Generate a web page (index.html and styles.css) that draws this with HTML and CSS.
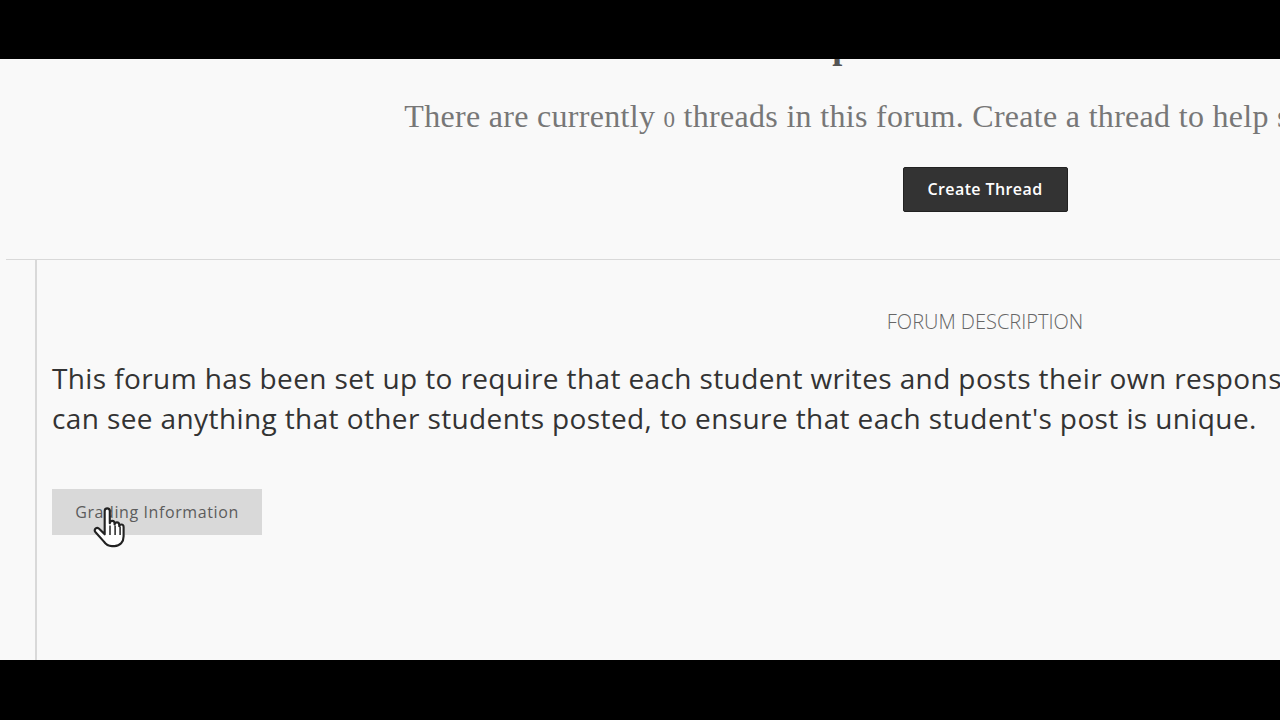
FILE: index.html
```html
<!DOCTYPE html>
<html lang="en">
<head>
<meta charset="utf-8">
<title>Forum</title>
<link rel="stylesheet" href="styles.css">
</head>
<body>
<div class="letterbox"></div>
<main class="viewport">
  <div class="canvas">
    <section class="intro">
      <h1 class="forum-title">This is a post-first discussion forum</h1>
      <p class="empty-note">There are currently <span class="oldnum">0</span> threads in this forum. Create a thread to help start the conversation.</p>
      <button class="create-btn">Create Thread</button>
    </section>
    <section class="description">
      <h2 class="desc-label">FORUM DESCRIPTION</h2>
      <p class="desc-text">This forum has been set up to require that each student writes and posts their own response before they<br>can see anything that other students posted, to ensure that each student's post is unique.</p>
      <div class="grading">
        <button class="grading-btn">Grading Information</button>
        <svg class="cursor" viewBox="0 0 32 38" width="34" height="41" aria-hidden="true">
          <path d="M11 3.5c0-1.6 1.1-2.5 2.4-2.5s2.4 1 2.4 2.5V15c.3-1.5 1.2-2.2 2.3-2.2 1.3 0 2.2 1 2.2 2.4v1c.3-1.3 1.2-2 2.2-2 1.3 0 2.2 1 2.2 2.4v1.2c.3-1 1.1-1.6 2-1.600 1.300 0 2.100 1 2.100 2.400v8.600c0 5.400-3.300 9.300-8.600 9.300h-2.400c-3.300 0-5.600-1.400-7.500-4.200L2.200 23.200c-.8-1.200-.6-2.600.4-3.400 1.100-.8 2.500-.5 3.400.5L11 25.400z" fill="#fff" stroke="#222" stroke-width="2" stroke-linejoin="round"/>
          <path d="M16 17v9M20.800 17v9M25.500 18v8" fill="none" stroke="#222" stroke-width="1.400"/>
        </svg>
      </div>
    </section>
  </div>
</main>
<div class="letterbox letterbox-bottom"></div>
</body>
</html>
```
FILE: styles.css
```css
html, body {
  margin: 0;
  height: 720px;
  overflow: hidden;
  background: #000;
}
body {
  display: flex;
  flex-direction: column;
}
.letterbox {
  height: 59px;
  background: #000;
  flex: none;
}
.letterbox-bottom {
  height: 60px;
}
.viewport {
  height: 601px;
  flex: none;
  overflow: hidden;
  background: #f9f9f9;
}
.canvas {
  width: 1970px;
}
.intro {
  margin-left: 6px;
  width: 1958px;
  height: 200px;
  border-bottom: 1px solid #d9d9d9;
  display: flex;
  flex-direction: column;
  align-items: center;
}
.forum-title {
  margin: -33px 0 0;
  height: 40px;
  font: 700 36px/40px "Liberation Serif", serif;
  color: #555;
  white-space: nowrap;
  letter-spacing: 1.9px;
}
.empty-note {
  margin: 32px 0 0;
  font: 400 32px/36px "Liberation Serif", serif;
  letter-spacing: 0.3px;
  color: #777;
  white-space: nowrap;
}
.oldnum {
  font-size: 0.72em;
}
.create-btn {
  margin-top: 30px;
  width: 165px;
  height: 45px;
  padding: 0 0 2px;
  border: 1px solid #222;
  border-radius: 2px;
  background: #333;
  color: #fff;
  font: 600 16px "Open Sans", sans-serif;
  letter-spacing: 0.4px;
}
.description {
  margin-left: 35px;
  width: 1898px;
  height: 401px;
  padding-left: 15px;
  box-sizing: border-box;
  border-left: 2px solid #d9d9d9;
}
.desc-label {
  margin: 0 0 0 -15px;
  padding-top: 49px;
  text-align: center;
  font: 300 20px/26px "Open Sans", sans-serif;
  letter-spacing: 0;
  color: #666;
}
.desc-text {
  margin: 23px 0 0;
  font: 400 28px/40px "Open Sans", sans-serif;
  letter-spacing: 0.39px;
  color: #333;
  white-space: nowrap;
}
.grading {
  margin-top: 51px;
  position: relative;
  width: 210px;
}
.grading-btn {
  display: block;
  width: 210px;
  height: 46px;
  padding: 0;
  border: 0;
  background: #d9d9d9;
  color: #5c5c5c;
  font: 400 16px "Open Sans", sans-serif;
  letter-spacing: 0.6px;
}
.cursor {
  position: absolute;
  left: 41px;
  top: 18px;
}
```
